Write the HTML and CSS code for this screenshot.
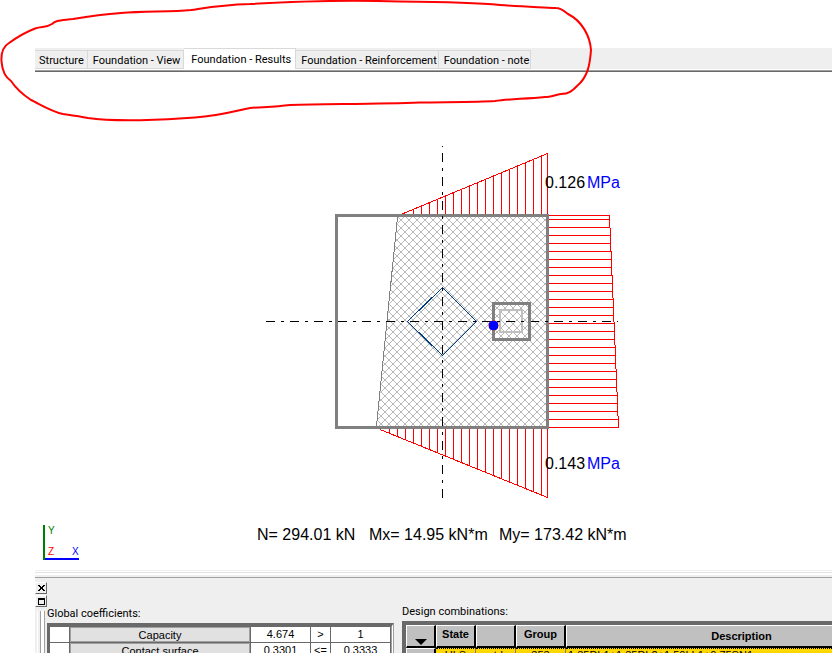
FILE: index.html
```html
<!DOCTYPE html>
<html lang="en">
<head>
    <meta charset="UTF-8">
    <meta name="viewport" content="width=device-width, initial-scale=1.0">
    <title>Foundation - Results</title>
    <link rel="stylesheet" href="styles.css">
</head>
<body>
    <div class="workspace">
        <nav class="tabs" role="tablist">
            <button class="tab" role="tab">Structure</button>
            <button class="tab" role="tab">Foundation - View</button>
            <button class="tab active" role="tab" aria-selected="true">Foundation - Results</button>
            <button class="tab" role="tab">Foundation - Reinforcement</button>
            <button class="tab" role="tab">Foundation - note</button>
        </nav>

        <main class="view">
            <svg class="drawing" viewBox="35 72 797 498" width="797" height="498">
                <defs>
                    <pattern id="hatch" width="8" height="8" x="409" y="220" patternUnits="userSpaceOnUse">
                        <path d="M0 0L8 8M8 0L0 8" stroke="#b8b8b8" fill="none"/>
                    </pattern>
                </defs>

                <!-- contact zone -->
                <path d="M398 217H546V426H377Z" fill="url(#hatch)"/>
                <path class="crisp" d="M397.500 217L376.500 426" stroke="#808080"/>

                <!-- stress diagrams -->
                <g class="crisp stress">
                    <path d="M401 214.500L547.500 153.500V215M380 429.500L547.500 497.500V429"/>
                    <path id="top"/>
                    <path id="bottom"/>
                    <path id="side"/>
                    <path d="M549 215.500H609.500L618.500 427.500H549"/>
                </g>

                <!-- footing -->
                <rect class="crisp" x="336.500" y="215.500" width="211" height="212" fill="none" stroke="#808080" stroke-width="3"/>

                <!-- column -->
                <rect class="crisp" x="500" y="310" width="22" height="22" fill="none" stroke="#c0c0c0" stroke-width="2"/>
                <path class="crisp axis" d="M266 321.500H618"/>
                <path class="crisp axis" d="M442.500 146V498" stroke-dashoffset="17"/>
                <rect class="crisp" x="493.500" y="303.500" width="36" height="36" fill="none" stroke="#808080" stroke-width="3"/>
                <path class="crisp" d="M442.500 287.500L476.500 321.500L442.500 355.500L407.500 321.500Z" fill="none" stroke="#004080"/>
                <circle cx="493.500" cy="325.500" r="5" fill="#f00"/>
                <path d="M491 321h5l2 2v5l-2 2h-5l-2-2v-5z" fill="#00f"/>

                <text class="value" x="545" y="188">0.126</text>
                <text class="value unit" x="587" y="188">MPa</text>
                <text class="value" x="545" y="469">0.143</text>
                <text class="value unit" x="587" y="469">MPa</text>

                <text class="value" x="257" y="540">N= 294.01 kN</text>
                <text class="value" x="369" y="540">Mx= 14.95 kN*m</text>
                <text class="value" x="499" y="540">My= 173.42 kN*m</text>

                <!-- coordinate system -->
                <path class="crisp" d="M44 525V560" stroke="#008000" stroke-width="2"/>
                <path class="crisp" d="M45 559H79" stroke="#00f" stroke-width="2"/>
                <text class="axis-name" x="48" y="534" fill="#008000">Y</text>
                <text class="axis-name" x="48" y="555" fill="#f00">Z</text>
                <text class="axis-name" x="72" y="555" fill="#00f">X</text>
            </svg>
        </main>

        <div class="splitter"></div>

        <section class="panel">
            <div class="dock">
                <button class="dock-button" aria-label="Close">
                    <svg width="7" height="6" viewBox="0 0 7 6"><path d="M0 0h2v1h1v1h1V1h1V0h2v1H6v1H5v2h1v1h1v1H5V5H4V4H3v1H2v1H0V5h1V4h1V2H1V1H0z"/></svg>
                </button>
                <button class="dock-button" aria-label="Maximize">
                    <svg width="7" height="7" viewBox="0 0 7 7"><path d="M0 0h7v7H0zM1 2v4h5V2z" fill-rule="evenodd"/></svg>
                </button>
                <div class="grip"></div>
            </div>

            <div class="coefficients">
                <h2>Global coefficients:</h2>
                <table class="coef-table">
                    <tr><td class="mark"></td><th><span>Capacity</span></th><td>4.674</td><td class="sign">&gt;</td><td>1</td></tr>
                    <tr><td class="mark"></td><th><span>Contact surface</span></th><td>0.3301</td><td class="sign">&lt;=</td><td>0.3333</td></tr>
                </table>
            </div>

            <div class="combinations">
                <h2>Design combinations:</h2>
                <table class="comb-table">
                    <tr>
                        <th class="c-sort"><svg width="12" height="6" viewBox="0 0 12 6"><path d="M0 0h12L6 6z"/></svg></th>
                        <th class="c-state">State</th>
                        <th class="c-type"></th>
                        <th class="c-group">Group</th>
                        <th class="c-desc">Description</th>
                    </tr>
                    <tr class="selected">
                        <th></th>
                        <td>ULS</td>
                        <td>std</td>
                        <td>353</td>
                        <td class="desc">1.35DL1+1.35DL2+1.50LL1+0.75SN1</td>
                    </tr>
                </table>
            </div>
        </section>
    </div>

    <!-- red pen mark round the tabs -->
    <svg class="pen" width="600" height="130" viewBox="0 0 600 130">
        <path d="M35 28.500C42 26 46 28 52 24C56 20 60 20.500 73 19C90 16 105 14 121 13C145 11 170 12 191 10C205 8 220 5 250 4C300 1 350 0 400 1.500C450 2 480 3 500 5C525 7 540 7 556 8C561 8 564 11 568 14C582 21 590 36 591 50C590 64 588 77 577 86C572 91 569 94 561 94C555 95 550 97 545 97C525 99 508 99 495 101C480 102 450 102 420 102.500C380 104 330 104 290 105C275 107 262 107 250 108C235 111 220 116 195 117.500C165 120 115 122 88 118C78 116 70 115 63 114C50 111 38 103 31 100C22 94 15 87 11 81C5 77 2 69 1.500 61C1 52 4 46 9 43C16 38 26 32 35 28.500"/>
    </svg>

    <script>
        // diagram lines every 8 px between the footing edge and the stress curve
        let top1 = '', bottom1 = '', side = '';
        for (let x = 413; x <= 541; x += 8) {
            const y = 214.5 - (x - 401) * 61 / 146;
            top1 += `M${x + 0.5} ${Math.round(y)}V214`;
        }
        for (let x = 389; x <= 541; x += 8) {
            const y = 429.5 + (x - 380) * 68 / 167;
            bottom1 += `M${x + 0.5} 429V${Math.round(y)}`;
        }
        for (let y = 219; y <= 419; y += 8) {
            const x = 609.5 + (y - 215) * 9 / 212;
            side += `M549 ${y + 0.5}H${Math.round(x)}`;
        }
        document.getElementById('top').setAttribute('d', top1);
        document.getElementById('bottom').setAttribute('d', bottom1);
        document.getElementById('side').setAttribute('d', side);
    </script>
</body>
</html>
```
FILE: styles.css
```css
body {
    margin: 0;
    height: 100vh;
    overflow: hidden;
    background-color: #fff;
    color: #000;
    font-family: "Liberation Sans", Arial, sans-serif;
    font-size: 11px;
}
.workspace {
    display: flex;
    flex-direction: column;
    box-sizing: border-box;
    height: 100vh;
    padding: 48px 0 0 35px;
}

/* tabs */
.tabs {
    display: flex;
    flex: none;
    align-items: flex-end;
    height: 21px;
    background-color: #efefef;
}
.tab {
    height: 19px;
    padding: 2px 3px 0 5px;
    border: 1px solid #d9d9d9;
    border-left: none;
    background-color: #efefef;
    color: #000;
    font-family: Roboto, "Liberation Sans", sans-serif;
    font-size: 11px;
    line-height: 15px;
    white-space: nowrap;
}
.tab:first-child {
    padding-left: 4px;
}
.tab.active {
    height: 21px;
    padding: 0 4px 0 7px;
    border-bottom: none;
    background-color: #fff;
}
.tab.active ~ .tab {
    padding-right: 1px;
}

/* drawing */
.view {
    flex: none;
    margin-top: 1px;
    border-top: 1px solid #a0a0a0;
    box-shadow: inset 0 1px #696969;
    overflow: hidden;
}
.drawing {
    display: block;
    margin-top: 1px;
}
.crisp {
    shape-rendering: crispEdges;
}
.stress {
    fill: none;
    stroke: #f00;
}
.axis {
    stroke: #000;
    stroke-dasharray: 9 6 3 6;
}
.value {
    font-size: 16px;
}
.unit {
    fill: #00f;
}
.axis-name {
    font-size: 10px;
}

/* bottom panel */
.splitter {
    flex: none;
    height: 4px;
    border-top: 1px solid #efefef;
    border-bottom: 2px solid #efefef;
    background: linear-gradient(#fff 1px, #e3e3e3 1px, #e3e3e3 2px, #fff 2px);
}
.panel {
    display: flex;
    flex: 1;
    min-height: 0;
    border-top: 1px solid #a0a0a0;
    background-color: #efefef;
    overflow: hidden;
}
.panel h2 {
    margin: 0;
    font-family: Roboto, "Liberation Sans", sans-serif;
    font-size: 11px;
    font-weight: normal;
    line-height: 16px;
}
.dock {
    display: flex;
    flex-direction: column;
    gap: 1px;
    width: 12px;
    padding-top: 4px;
}
.dock-button {
    display: flex;
    align-items: center;
    justify-content: center;
    box-sizing: border-box;
    width: 12px;
    height: 12px;
    padding: 0;
    border: 1px solid #fff;
    border-right-color: #696969;
    border-bottom-color: #696969;
    background-color: #efefef;
}
.dock-button svg {
    flex: none;
}
.grip {
    flex: 1;
    width: 2px;
    margin: 3px 0 0 2px;
    border: 1px solid #a0a0a0;
    border-width: 0 1px;
    border-left-color: #fff;
    box-shadow: 3px 0 #fff, 4px 0 #a0a0a0;
}
.coefficients {
    width: 348px;
    padding-top: 28px;
}
.combinations {
    flex: 1;
    min-width: 0;
    margin-left: 7px;
    padding-top: 26px;
    overflow: hidden;
}
.coef-table,
.comb-table {
    border-collapse: separate;
    border-spacing: 0;
    table-layout: fixed;
}
.coef-table {
    width: 347px;
    margin-top: 1px;
    border: 3px solid #696969;
    border-top-width: 4px;
    border-right: 3px double #a0a0a0;
    background-color: #fff;
}
.coef-table td,
.coef-table th {
    width: 59px;
    height: 15px;
    padding: 0;
    border-right: 1px solid #696969;
    border-bottom: 1px solid #696969;
    font-weight: normal;
    line-height: 15px;
    text-align: center;
}
.coef-table th {
    width: 180px;
}
.coef-table th span {
    display: block;
    height: 13px;
    border: 1px solid #a0a0a0;
    background-color: #e1e1e1;
    line-height: 14px;
}
.coef-table .mark,
.coef-table .sign {
    width: 19px;
}
.comb-table {
    width: 100%;
    min-width: 516px;
    margin-top: 1px;
    border: 4px solid #696969;
    border-right: none;
}
.comb-table th {
    height: 20px;
    padding: 0;
    border: 1px solid #fff;
    border-right: 2px solid #000;
    border-bottom: 2px solid #000;
    background-color: #c0c0c0;
    line-height: 16px;
}
.comb-table tr:first-child th {
    vertical-align: top;
}
.comb-table .c-sort {
    width: 27px;
    vertical-align: bottom !important;
}
.comb-table .c-state,
.comb-table .c-type {
    width: 37px;
}
.comb-table .c-group {
    width: 47px;
}
.comb-table .c-desc {
    vertical-align: middle !important;
}
.c-sort svg {
    display: block;
    margin: 0 auto 1px;
}
.selected td {
    height: 14px;
    padding: 0;
    border-top: 1px dotted #000;
    border-right: 1px solid #808080;
    background-color: #ffd700;
    line-height: 12px;
    text-align: center;
    vertical-align: top;
}
.selected .desc {
    padding-left: 2px;
    text-align: left;
}

/* pen mark */
.pen {
    position: absolute;
    top: 0;
    left: 0;
    fill: none;
    stroke: #f00;
    stroke-width: 2;
    pointer-events: none;
}
```
